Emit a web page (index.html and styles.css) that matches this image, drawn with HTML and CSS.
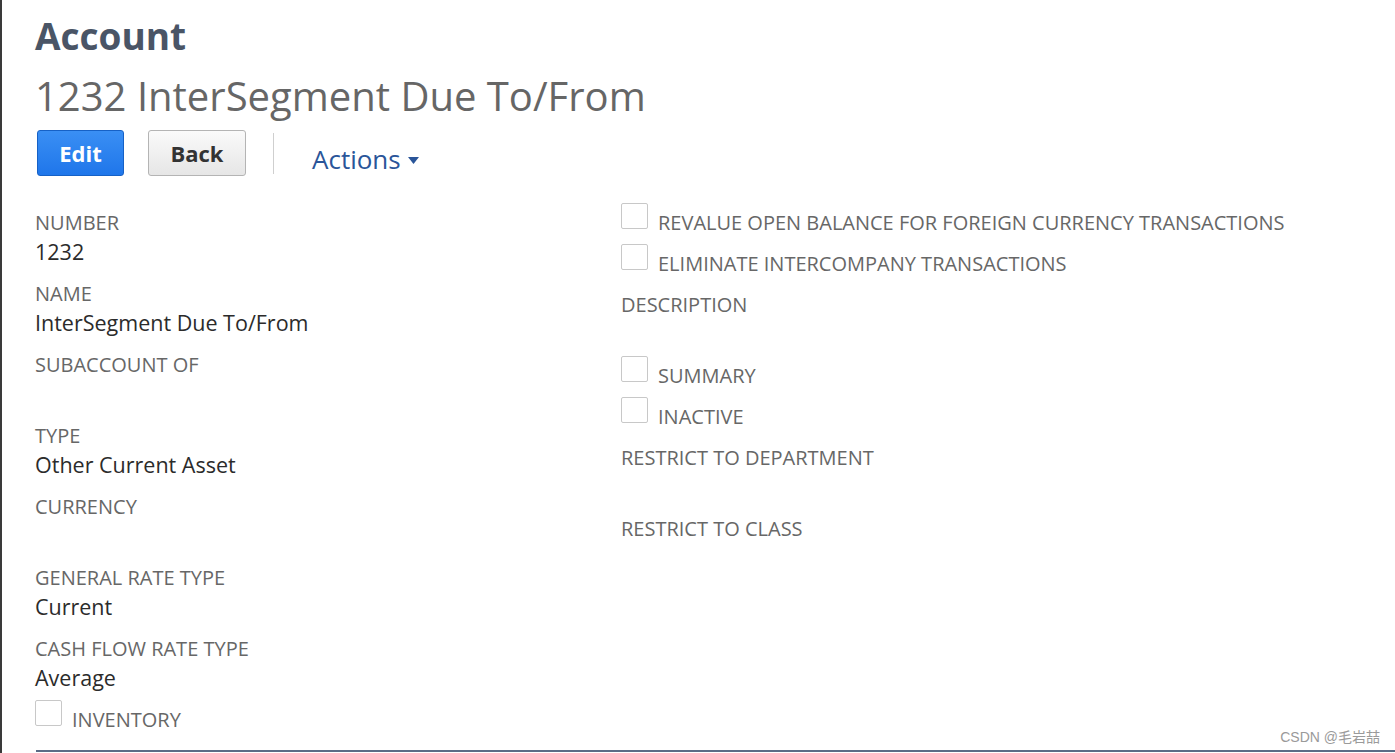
FILE: index.html
```html
<!DOCTYPE html>
<html lang="en">
<head>
<meta charset="utf-8">
<title>Account</title>
<link rel="stylesheet" href="styles.css">
</head>
<body>
<div class="page">
  <h1 class="rectype">Account</h1>
  <h2 class="rectitle">1232 InterSegment Due To/From</h2>
  <div class="toolbar">
    <button class="btn btn-primary">Edit</button>
    <button class="btn btn-secondary">Back</button>
    <span class="sep"></span>
    <span class="actions">Actions<svg class="caret" width="11" height="7" viewBox="0 0 11 7"><path d="M0 0H11L5.5 7Z" fill="#2a5599"/></svg></span>
  </div>
  <div class="fields">
    <div class="col">
      <div class="field"><div class="label">Number</div><div class="value">1232</div></div>
      <div class="field"><div class="label">Name</div><div class="value">InterSegment Due To/From</div></div>
      <div class="field"><div class="label">Subaccount Of</div><div class="value"></div></div>
      <div class="field"><div class="label">Type</div><div class="value">Other Current Asset</div></div>
      <div class="field"><div class="label">Currency</div><div class="value"></div></div>
      <div class="field"><div class="label">General Rate Type</div><div class="value">Current</div></div>
      <div class="field"><div class="label">Cash Flow Rate Type</div><div class="value">Average</div></div>
      <div class="cbrow"><span class="box"></span><span class="label">Inventory</span></div>
    </div>
    <div class="col">
      <div class="cbrow"><span class="box"></span><span class="label">Revalue Open Balance for Foreign Currency Transactions</span></div>
      <div class="cbrow"><span class="box"></span><span class="label">Eliminate Intercompany Transactions</span></div>
      <div class="field"><div class="label">Description</div><div class="value"></div></div>
      <div class="cbrow"><span class="box"></span><span class="label">Summary</span></div>
      <div class="cbrow"><span class="box"></span><span class="label">Inactive</span></div>
      <div class="field"><div class="label">Restrict to Department</div><div class="value"></div></div>
      <div class="field"><div class="label">Restrict to Class</div><div class="value"></div></div>
    </div>
  </div>
  <div class="bottom">
    <span class="watermark">CSDN @毛岩喆</span>
  </div>
</div>
</body>
</html>
```
FILE: styles.css
```css
html, body {
  margin: 0;
  padding: 0;
  background: #fff;
}
body {
  font-family: "Open Sans", "Noto Sans", sans-serif;
  width: 1395px;
  height: 753px;
  overflow: hidden;
}
.page {
  box-sizing: border-box;
  height: 753px;
  border-left: 2px solid #3a3a3a;
  padding: 14px 0 0 33px;
  display: flex;
  flex-direction: column;
}
.rectype {
  margin: 0;
  font-size: 37px;
  line-height: 44px;
  font-weight: 700;
  color: #4a5566;
}
.rectitle {
  margin: 13px 0 0;
  font-size: 40px;
  line-height: 50px;
  font-weight: 400;
  color: #666;
}
.toolbar {
  margin-top: 9px;
  display: flex;
  align-items: center;
  height: 46px;
}
.btn {
  box-sizing: border-box;
  height: 46px;
  font-family: "Open Sans", sans-serif;
  font-size: 22px;
  font-weight: 700;
  border-radius: 3px;
  padding: 0;
  cursor: pointer;
}
.btn-primary {
  width: 87px;
  margin-left: 2px;
  color: #fff;
  background: linear-gradient(#3a8ff4, #1f76ea);
  border: 1px solid #1661c6;
}
.btn-secondary {
  width: 98px;
  margin-left: 24px;
  color: #333;
  background: linear-gradient(#fafafa, #e6e6e6);
  border: 1px solid #b4b4b4;
}
.sep {
  width: 1px;
  height: 41px;
  background: #cfcfcf;
  margin-left: 27px;
}
.actions {
  margin-left: 38px;
  margin-top: 12px;
  font-size: 26px;
  color: #2a5599;
  display: inline-flex;
  align-items: center;
  gap: 7px;
}
.caret {
  margin-top: 2px;
}
.fields {
  margin-top: 32px;
  display: grid;
  grid-template-columns: 586px 1fr;
}
.col {
  display: flex;
  flex-direction: column;
}
.label {
  font-size: 20px;
  line-height: 29px;
  color: #676767;
  text-transform: uppercase;
}
.value {
  font-size: 21.5px;
  line-height: 29px;
  height: 29px;
  color: #2b2b2b;
}
.field {
  margin-bottom: 13px;
}
.cbrow {
  display: flex;
  align-items: flex-start;
  gap: 10px;
  height: 29px;
  margin-bottom: 12px;
}
.box {
  flex: none;
  box-sizing: border-box;
  width: 27px;
  height: 26px;
  margin-top: -5px;
  border: 1px solid #c8c8c8;
  border-radius: 2px;
  background: #fff;
}
.bottom {
  margin-top: auto;
  position: relative;
  height: 1px;
  border-top: 2px solid #5a6b86;
  margin-left: 1px;
}
.watermark {
  position: absolute;
  right: 15px;
  bottom: 7px;
  font-family: "Liberation Sans", "Noto Sans CJK SC", sans-serif;
  font-size: 14px;
  color: #9a9a9a;
}
```
